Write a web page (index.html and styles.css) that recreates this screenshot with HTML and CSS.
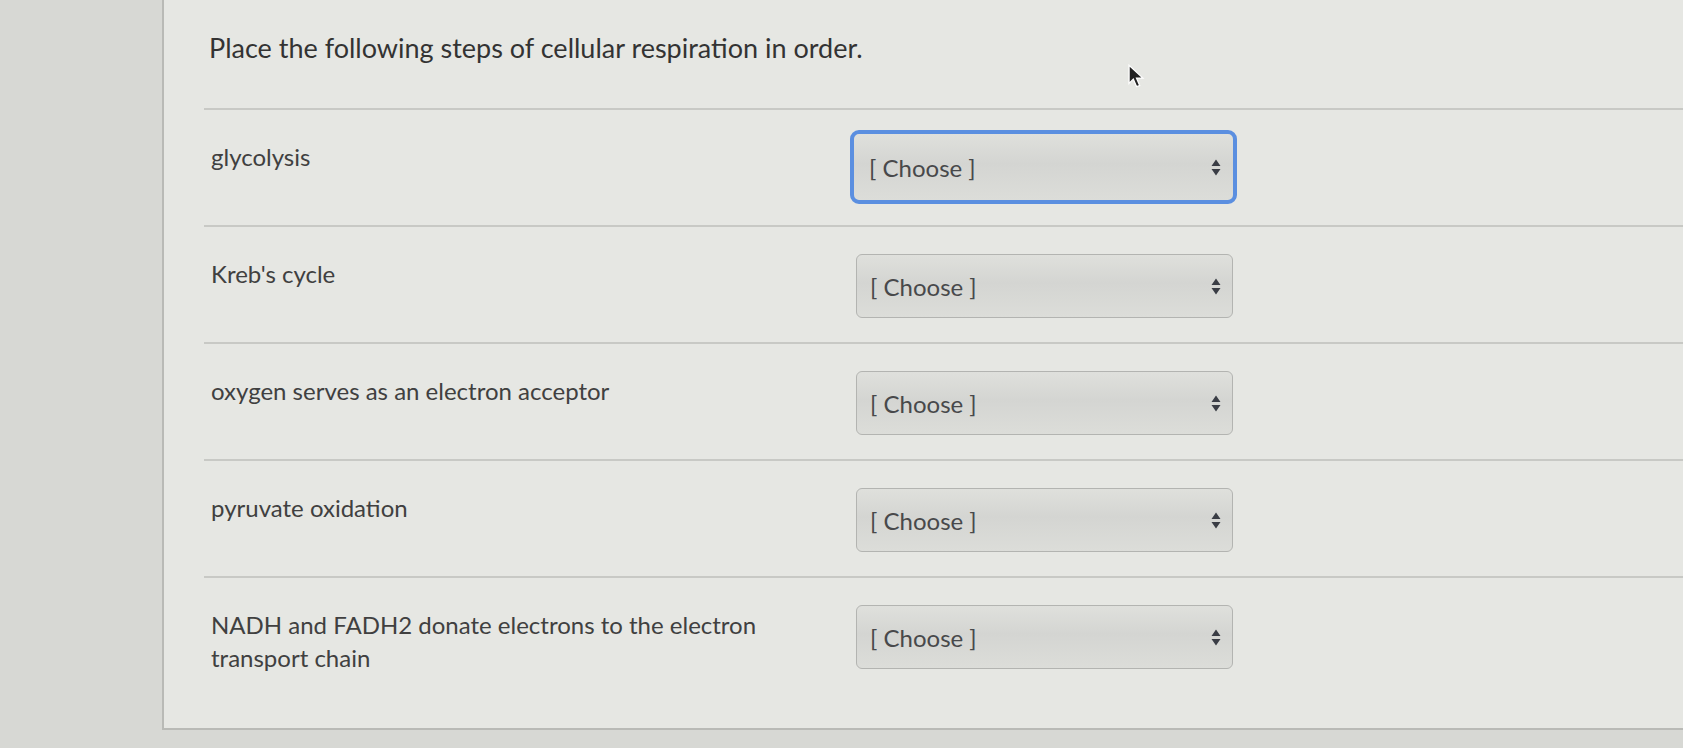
FILE: index.html
```html
<!DOCTYPE html>
<html>
<head>
<meta charset="utf-8">
<link rel="stylesheet" href="styles.css">
</head>
<body>
<div class="page">
  <div class="gutter"></div>
  <div class="panel">
    <h1 class="title">Place the following steps of cellular respiration in order.</h1>
    <div class="row">
      <div class="label">glycolysis</div>
      <div class="select focused"><span>[ Choose ]</span><svg class="arrows" width="10" height="19" viewBox="0 0 10 18"><path d="M5 1 L9.5 7.5 H0.5 Z M5 17 L9.5 10.5 H0.5 Z" fill="#3a3d45"/></svg></div>
    </div>
    <div class="row">
      <div class="label">Kreb's cycle</div>
      <div class="select"><span>[ Choose ]</span><svg class="arrows" width="10" height="19" viewBox="0 0 10 18"><path d="M5 1 L9.5 7.5 H0.5 Z M5 17 L9.5 10.5 H0.5 Z" fill="#3a3d45"/></svg></div>
    </div>
    <div class="row">
      <div class="label">oxygen serves as an electron acceptor</div>
      <div class="select"><span>[ Choose ]</span><svg class="arrows" width="10" height="19" viewBox="0 0 10 18"><path d="M5 1 L9.5 7.5 H0.5 Z M5 17 L9.5 10.5 H0.5 Z" fill="#3a3d45"/></svg></div>
    </div>
    <div class="row">
      <div class="label">pyruvate oxidation</div>
      <div class="select"><span>[ Choose ]</span><svg class="arrows" width="10" height="19" viewBox="0 0 10 18"><path d="M5 1 L9.5 7.5 H0.5 Z M5 17 L9.5 10.5 H0.5 Z" fill="#3a3d45"/></svg></div>
    </div>
    <div class="row last">
      <div class="label">NADH and FADH2 donate electrons to the electron transport chain</div>
      <div class="select"><span>[ Choose ]</span><svg class="arrows" width="10" height="19" viewBox="0 0 10 18"><path d="M5 1 L9.5 7.5 H0.5 Z M5 17 L9.5 10.5 H0.5 Z" fill="#3a3d45"/></svg></div>
    </div>
    <svg class="cursor" width="17" height="26" viewBox="0 0 16 24"><path d="M1 1 L1 18 L5 14 L8 21 L11 20 L8 13 L14 13 Z" fill="#222" stroke="#fff" stroke-width="1.2"/></svg>
  </div>
</div>
</body>
</html>
```

FILE: styles.css
```css
html, body {
  margin: 0;
  padding: 0;
  height: 100%;
}
body {
  background: #d7d8d4;
  font-family: Lato, "Open Sans", sans-serif;
  color: #404040;
  overflow: hidden;
}
.page {
  display: flex;
  height: 730px;
}
.gutter {
  width: 162px;
  flex: none;
}
.panel {
  flex: 1;
  position: relative;
  background: #e6e7e3;
  border-left: 2px solid #b9bab6;
  border-bottom: 2px solid #b9bab6;
  padding: 32px 0 0 40px;
  box-sizing: border-box;
}
.title {
  margin: 0 0 44px 5px;
  font-size: 27px;
  line-height: 32px;
  font-weight: 400;
  color: #333;
}
.row {
  display: flex;
  border-top: 2px solid #c8c9c5;
  height: 117px;
  box-sizing: border-box;
  padding-top: 27px;
}
.label {
  width: 652px;
  flex: none;
  padding: 3px 0 0 7px;
  box-sizing: border-box;
  font-size: 24px;
  line-height: 33px;
  color: #404040;
}
.row.last .label {
  padding-right: 90px;
}
.select {
  width: 377px;
  height: 64px;
  box-sizing: border-box;
  border: 1.5px solid #b3b4b1;
  border-radius: 6px;
  background: linear-gradient(180deg, #dfe0dc 0%, #d4d5d2 45%, #dcddd9 100%);
  display: flex;
  align-items: center;
  justify-content: space-between;
  padding: 0 11px 0 13px;
  font-size: 24px;
  color: #48494b;
}
.select.focused {
  width: 387px;
  height: 74px;
  margin: -7px 0 0 -6px;
  border: 4px solid #5b8fe0;
  border-radius: 9px;
  padding: 0 12px 0 15px;
}
.arrows {
  display: block;
}
.cursor {
  position: absolute;
  left: 964px;
  top: 64px;
}
```
